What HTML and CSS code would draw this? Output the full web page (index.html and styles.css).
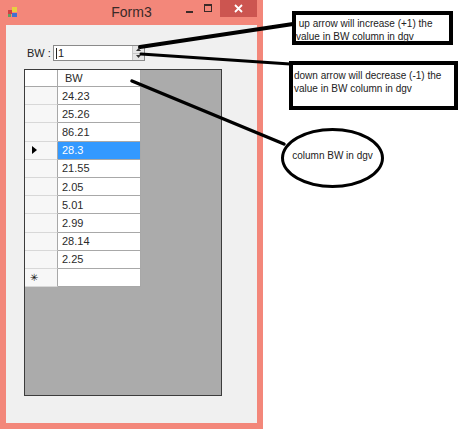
FILE: index.html
```html
<!DOCTYPE html>
<html>
<head>
<meta charset="utf-8">
<link rel="stylesheet" href="styles.css">
</head>
<body>
<div class="page">
  <div class="window">
    <div class="titlebar">
      <svg class="app-icon" width="10" height="11" viewBox="0 0 10 11">
        <rect x="0" y="3" width="4" height="4" fill="#d04040"/>
        <rect x="4" y="0" width="5" height="5" fill="#e8d040"/>
        <rect x="4" y="6" width="5" height="4" fill="#4070d0"/>
        <rect x="0" y="7" width="3" height="3" fill="#60a060"/>
      </svg>
      <div class="title">Form3</div>
      <div class="controls">
        <span class="ctl-min"></span>
        <span class="ctl-max"></span>
        <span class="ctl-close">
          <svg width="9" height="9" viewBox="0 0 9 9"><path d="M1 1 L8 8 M8 1 L1 8" stroke="#fff" stroke-width="1.8"/></svg>
        </span>
      </div>
    </div>
    <div class="client">
      <div class="bw-row">
        <span class="bw-label">BW :</span>
        <div class="numeric">
          <span class="num-value">1</span>
          <div class="spin">
            <span class="spin-btn"><svg width="5" height="3" viewBox="0 0 5 3"><path d="M0 3 L2.5 0 L5 3Z" fill="#333"/></svg></span>
            <span class="spin-btn"><svg width="5" height="3" viewBox="0 0 5 3"><path d="M0 0 L2.5 3 L5 0Z" fill="#333"/></svg></span>
          </div>
        </div>
      </div>
      <div class="dgv">
        <div class="dgv-table">
          <div class="row header-row"><span class="rh"></span><span class="cell head">BW</span></div>
          <div class="row"><span class="rh"></span><span class="cell">24.23</span></div>
          <div class="row"><span class="rh"></span><span class="cell">25.26</span></div>
          <div class="row"><span class="rh"></span><span class="cell">86.21</span></div>
          <div class="row"><span class="rh"><svg width="5" height="8" viewBox="0 0 5 8"><path d="M0 0 L5 4 L0 8Z" fill="#000"/></svg></span><span class="cell selected">28.3</span></div>
          <div class="row"><span class="rh"></span><span class="cell">21.55</span></div>
          <div class="row"><span class="rh"></span><span class="cell">2.05</span></div>
          <div class="row"><span class="rh"></span><span class="cell">5.01</span></div>
          <div class="row"><span class="rh"></span><span class="cell">2.99</span></div>
          <div class="row"><span class="rh"></span><span class="cell">28.14</span></div>
          <div class="row"><span class="rh"></span><span class="cell">2.25</span></div>
          <div class="row"><span class="rh star">&#x2733;</span><span class="cell"></span></div>
        </div>
      </div>
    </div>
  </div>

  <svg class="callout-lines" width="474" height="447" viewBox="0 0 474 447">
    <path d="M140 47 L293 24" stroke="#000" stroke-width="4" stroke-linecap="round"/>
    <path d="M141 54 L290 64" stroke="#000" stroke-width="3" stroke-linecap="round"/>
    <path d="M132 81 L284 144" stroke="#000" stroke-width="3.5" stroke-linecap="round"/>
  </svg>

  <div class="note note-up">&nbsp;up arrow will increase (+1) the<br>value in BW column in dgv</div>
  <div class="note note-down">down arrow will decrease (-1) the<br>value in BW column in dgv</div>
  <div class="note-ellipse">column BW in dgv</div>
</div>
</body>
</html>
```
FILE: styles.css
```css
html, body {
  margin: 0;
  padding: 0;
  background: #ffffff;
}
body {
  font-family: "Liberation Sans Narrow", "Liberation Sans", Arial, sans-serif;
  font-size: 11px;
  color: #222;
}
.page {
  position: relative;
  width: 474px;
  height: 447px;
  overflow: hidden;
}
.window {
  width: 263px;
  height: 429px;
  background: #f3877a;
  display: flex;
  flex-direction: column;
  box-sizing: border-box;
}
.titlebar {
  height: 25px;
  display: flex;
  align-items: flex-start;
  position: relative;
}
.app-icon {
  margin: 7px 0 0 8px;
}
.title {
  position: absolute;
  left: 0;
  right: 0;
  top: 4px;
  text-align: center;
  font-size: 14px;
  color: #3a2a28;
}
.controls {
  margin-left: auto;
  margin-right: 6px;
  display: flex;
  align-items: flex-start;
  position: relative;
}
.ctl-min {
  width: 7px;
  height: 2px;
  background: #3a2a28;
  margin: 11px 11px 0 0;
}
.ctl-max {
  width: 6px;
  height: 5px;
  border: 1px solid #3a2a28;
  border-top-width: 2px;
  margin: 4px 8px 0 0;
}
.ctl-close {
  width: 37px;
  height: 17px;
  background: #cc5550;
  display: flex;
  align-items: center;
  justify-content: center;
}
.client {
  flex: 1;
  margin: 0 6px 6px 6px;
  background: #f0f0f0;
  padding: 20px 0 0 18px;
  box-sizing: border-box;
}
.bw-row {
  display: flex;
  align-items: center;
  height: 16px;
}
.bw-label {
  width: 29px;
  padding-left: 3px;
  box-sizing: border-box;
  color: #222;
}
.numeric {
  width: 92px;
  height: 16px;
  box-sizing: border-box;
  border: 1px solid #8a8a8a;
  background: #fff;
  display: flex;
  align-items: center;
}
.num-value {
  flex: 1;
  padding-left: 1px;
  border-left: 1px solid #222;
  margin-left: 2px;
  line-height: 11px;
}
.spin {
  width: 12px;
  height: 14px;
  display: flex;
  flex-direction: column;
}
.spin-btn {
  flex: 1;
  background: #e6e6e6;
  border-left: 1px solid #c8c8c8;
  display: flex;
  align-items: center;
  justify-content: center;
}
.spin-btn + .spin-btn {
  border-top: 1px solid #c8c8c8;
}
.dgv {
  margin-top: 8px;
  width: 198px;
  height: 327px;
  box-sizing: border-box;
  border: 1px solid #3c3c3c;
  background: #ababab;
}
.dgv-table {
  width: 116px;
  display: flex;
  flex-direction: column;
}
.row {
  display: flex;
  height: 18.2px;
}
.header-row {
  height: 17px;
}
.rh {
  width: 33px;
  box-sizing: border-box;
  background: #f7f7f7;
  border-right: 1px solid #a8a8a8;
  border-bottom: 1px solid #d8d8d8;
  display: flex;
  align-items: center;
  padding-left: 7px;
}
.header-row .rh {
  background: #ffffff;
  border-bottom: 1px solid #a8a8a8;
}
.star {
  font-size: 10px;
  color: #111;
  padding-left: 5px;
}
.cell {
  flex: 1;
  box-sizing: border-box;
  background: #ffffff;
  border-bottom: 1px solid #a8a8a8;
  border-right: 1px solid #a8a8a8;
  display: flex;
  align-items: center;
  padding-left: 4px;
  color: #2a2a2a;
}
.cell.head {
  padding-left: 7px;
}
.cell.selected {
  background: #3399ff;
  color: #ffffff;
}
.callout-lines {
  position: absolute;
  left: 0;
  top: 0;
  pointer-events: none;
}
.note {
  position: absolute;
  box-sizing: border-box;
  border: 4px solid #000;
  background: #fff;
  font-size: 10px;
  line-height: 13px;
  color: #222;
  white-space: nowrap;
}
.note-up {
  left: 292px;
  top: 11px;
  width: 161px;
  height: 34px;
  padding: 2px 0 0 0;
}
.note-down {
  left: 289px;
  top: 61px;
  width: 169px;
  height: 49px;
  padding: 4px 0 0 1px;
}
.note-ellipse {
  position: absolute;
  left: 281px;
  top: 128px;
  width: 103px;
  height: 60px;
  box-sizing: border-box;
  border: 3px solid #000;
  border-radius: 50%;
  background: #fff;
  display: flex;
  align-items: center;
  justify-content: center;
  padding-bottom: 6px;
  font-size: 10px;
  color: #222;
  white-space: nowrap;
}
```
